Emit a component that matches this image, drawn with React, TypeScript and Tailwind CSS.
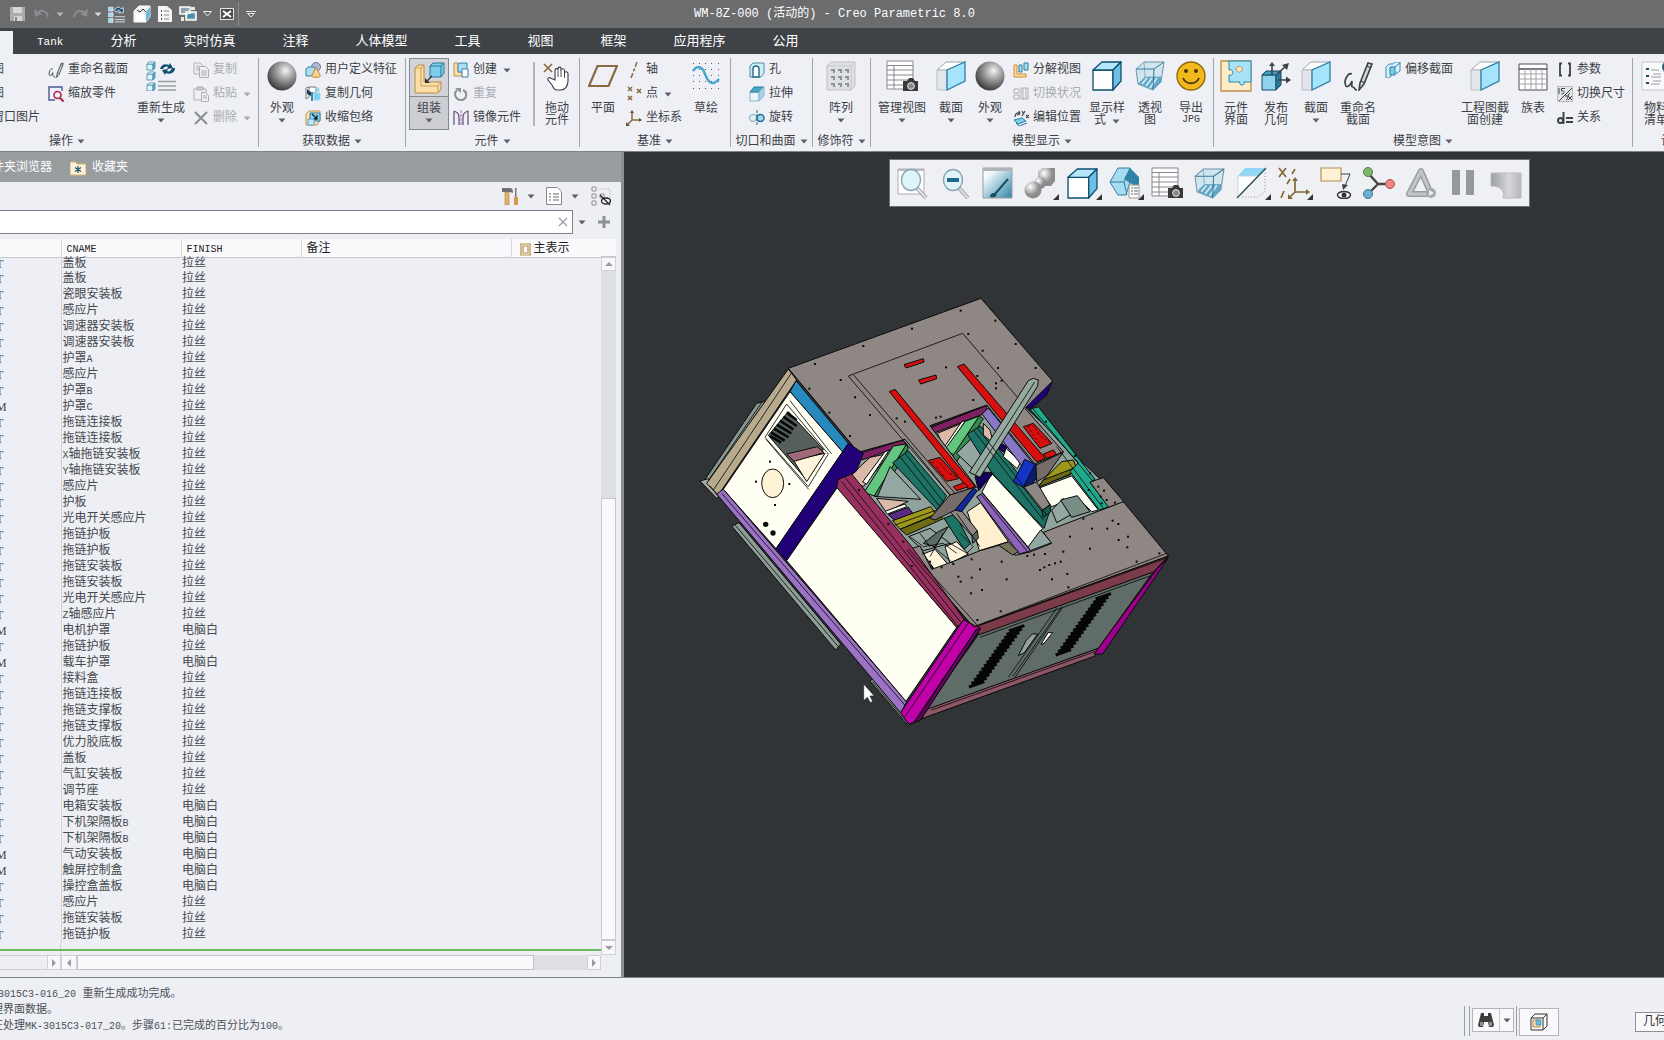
import type { ReactNode } from "react";

const INK = "#3c4248";
const NAVY = "#0d4f70";

/* ---------- Text helpers ---------- */

// Latin runs are set in a smaller mono face beside the Chinese glyphs
function Txt({ children }: { children: string }) {
  return (
    <>
      {children.split(/([\x21-\x7e]+)/).map((part, i) =>
        i % 2 ? (
          <span key={i} className="text-[10px] leading-none">{part}</span>
        ) : (
          part
        )
      )}
    </>
  );
}

function Caret({ className = "text-[#5d6166]" }: { className?: string }) {
  return (
    <svg width="8" height="5" viewBox="0 0 8 5" className={`shrink-0 ${className}`}>
      <path d="M0.5 0.5h7L4 4.5z" fill="currentColor" />
    </svg>
  );
}

/* ---------- Icons ---------- */

function Icon({ size = 16, box = 16, children }: { size?: number; box?: number; children: ReactNode }) {
  return (
    <svg width={size} height={size} viewBox={`0 0 ${box} ${box}`} fill="none" className="shrink-0">
      {children}
    </svg>
  );
}

function Sphere({ size = 30 }: { size?: number }) {
  return (
    <Icon size={size} box={30}>
      <defs>
        <radialGradient id="sphere" cx="0.62" cy="0.32" r="0.75">
          <stop offset="0" stopColor="#f4f4f4" />
          <stop offset="0.35" stopColor="#a9a9a9" />
          <stop offset="1" stopColor="#2e2e2e" />
        </radialGradient>
      </defs>
      <circle cx="15" cy="15" r="14.5" fill="url(#sphere)" />
    </Icon>
  );
}

function Cube({ size = 30 }: { size?: number }) {
  return (
    <Icon size={size} box={30}>
      <g stroke={NAVY} strokeWidth="1.3" strokeLinejoin="round">
        <path d="M1 9h20v20H1z" fill="#fff" />
        <path d="M1 9l9-8h19l-8 8z" fill="#b5e6fa" />
        <path d="M21 9l8-8v19l-8 9z" fill="#6dc0e4" />
      </g>
    </Icon>
  );
}

function SectionCube({ size = 30 }: { size?: number }) {
  return (
    <Icon size={size} box={30}>
      <path d="M1 9L10 1h19l-18 8z" fill="#fff" stroke="#9aa5ad" />
      <path d="M1 9h10v20H1z" fill="#e3e5ea" stroke="#b9bec5" />
      <path d="M11 9L29 1v19l-18 9z" fill="#a6e4fb" stroke="#2a7fa3" strokeWidth="1.3" />
    </Icon>
  );
}

function GlassBox({ size = 30 }: { size?: number }) {
  return (
    <Icon size={size} box={30}>
      <path d="M1 8l8-7h20l-3 20-8 8L3 23z" fill="#cfe6f1" stroke="#6d93a8" />
      <path d="M9 1l1 15h17M10 16L3 23" stroke="#8fb2c2" />
      <path d="M10 16h17l-1 5-8 8L3 23z" fill="#62a9c9" />
      <path d="M12 17l-5 6M17 17l-6 8M22 17l-7 10" stroke="#d7ecf5" strokeWidth="1.6" />
      <path d="M1 8h18l10-7M19 8l-1 21" stroke="#3c7a98" />
    </Icon>
  );
}

function SheetCamera({ size = 32 }: { size?: number }) {
  return (
    <Icon size={size} box={32}>
      <path d="M1 1h26v28H1z" fill="#fff" stroke="#85898e" />
      <path d="M1 5.5h26M1 10h26M1 15h26M1 20h26M1 25h26M8 5v24" stroke="#85898e" />
      <path d="M17 21h4l2-3h4l2 3h3v10H17z" fill="#3a3a3a" />
      <circle cx="25" cy="26" r="3.4" fill="#888" stroke="#e8e8e8" />
    </Icon>
  );
}

function Regenerate({ size = 30 }: { size?: number }) {
  return (
    <Icon size={size} box={30}>
      {[1, 11, 22].map((y) => (
        <g key={y} stroke="#3e8ba8" strokeWidth="0.8">
          <path d={`M1 ${y + 2}h6v6H1z`} fill="#e4f6fd" />
          <path d={`M1 ${y + 2}l2-2h6l-2 2z`} fill="#fff" />
          <path d={`M7 ${y + 2}l2-2v6l-2 2z`} fill="#5bb5d6" />
        </g>
      ))}
      <path d="M14 8c1-4 5-6 9-4l1-2 3 5-6 1 1-2c-2-1-4 0-5 2zM29 7c0 4-4 7-9 5l-1 2-3-5 6-1-1 2c2 1 4 0 5-3z" fill={NAVY} />
      <path d="M12 20.500h18M12 25h18M12 29h18" stroke="#9a9da2" strokeWidth="1.6" />
    </Icon>
  );
}

function Assemble() {
  return (
    <Icon size={32} box={32}>
      <path d="M2 6l3-3h6v17h17v7l-3 4H2z" fill="#fbdfa6" stroke="#b88a45" />
      <path d="M8 6v18h17M8 6l3-3M25 24l3-4M8 6H2M25 24v7" stroke="#c79b56" />
      <path d="M17 4l3-3h11v10l-3 4H17z" fill="#7fcdee" stroke="#2d7694" />
      <path d="M17 4h11v11M28 4l3-3" stroke="#2d7694" />
      <path d="M19 14l-6 6" stroke="#333" strokeWidth="1.3" />
      <path d="M12 16v5h5z" fill="#333" />
    </Icon>
  );
}

function DragHand() {
  return (
    <Icon size={30} box={30}>
      <path d="M2 3l8 8M10 3l-8 8" stroke="#8a6a3a" strokeWidth="1.6" />
      <path d="M13 19V9.500c0-2.500 3-2.500 3 0V8c0-2.500 3-2.500 3 0v1.500c0-2.500 3.500-2 3.500 0v3c0-2.500 3.500-2 3.500 0V20c0 5-3 9-7 9h-4c-3 0-4-3-5-5l-4-5c-1-2 1-3 2.500-2z" fill="#fff" stroke="#3a3a3a" strokeWidth="1.1" />
      <path d="M16 10v6M19 9v7M22.500 12v5" stroke="#3a3a3a" strokeWidth="0.9" />
    </Icon>
  );
}

const PlaneIcon = () => (
  <Icon size={30} box={30}>
    <path d="M9.500 5H29L20.500 25H1z" stroke="#8b6a42" strokeWidth="2.2" />
  </Icon>
);

const SketchIcon = () => (
  <Icon size={30} box={30}>
    {[2, 8, 14, 20, 27].map((y) =>
      [2, 8, 14, 20, 27].map((x) => <path key={`${x}-${y}`} d={`M${x} ${y}h1v1h-1z`} fill="#555" />)
    )}
    <path d="M2 10c4-6 9-5 12 3s7 13 14 5" stroke="#45a5cf" strokeWidth="2.4" />
  </Icon>
);

const PatternIcon = () => (
  <Icon size={30} box={30}>
    <path d="M1 5l4-4h24v24l-4 4H1z" fill="#dfe0e4" stroke="#bfc1c6" />
    <path d="M25 5h-24M25 5v24M25 5l4-4" stroke="#c6c8cc" />
    {[8, 15, 22].map((y) =>
      [5, 12, 19].map((x) => <path key={`${x}-${y}`} d={`M${x} ${y}h4v4h-2v-2h-2z`} fill="#8f9297" />)
    )}
  </Icon>
);

const Smiley = () => (
  <Icon size={30} box={30}>
    <circle cx="15" cy="15" r="14" fill="#f2b91c" stroke="#8c6a10" strokeWidth="1.4" />
    <circle cx="10" cy="10" r="2" fill="#4a3508" />
    <circle cx="20" cy="10" r="2" fill="#4a3508" />
    <path d="M7 17c3 7 13 7 16 0" stroke="#4a3508" strokeWidth="1.8" />
  </Icon>
);

const Puzzle = () => (
  <Icon size={32} box={32}>
    <path d="M1 1h30v30H1z" fill="#fdecc9" stroke="#c08d4a" strokeWidth="1.3" />
    <path d="M9 1h22v21h-7c2 4-6 4-4 0H9v-7c5 2 5-7 0-5z" fill="#a6e2f8" stroke="#2f86a8" />
    <path d="M16 9c1-4 8-3 6 1-1 3-5 3-6-1z" fill="#fdecc9" stroke="#c08d4a" />
  </Icon>
);

const PublishIcon = () => (
  <Icon size={30} box={30}>
    <path d="M1 14h14v15H1z" fill="#8ed4ef" stroke="#1c4a60" />
    <path d="M1 14l4-4h15l-5 4z" fill="#3f9dc0" stroke="#1c4a60" />
    <path d="M15 14l5-4v14l-5 5z" fill="#2b7a99" stroke="#1c4a60" />
    <path d="M11 14V3M16 13L25 5M17 19h10" stroke={INK} strokeWidth="1.6" />
    <path d="M8 5l3-4 3 4zM21 4l7-2-2 7zM25 15.500l5 3.500-5 3.500z" fill={INK} />
  </Icon>
);

function PenScribble({ size = 30 }: { size?: number }) {
  return (
    <Icon size={size} box={30}>
      <path d="M9 13C5 11 0 20 3 25c2 2 5-2 6-5 0 4-1 6 1 6s1 3 4 3" stroke={INK} strokeWidth="1.7" />
      <path d="M17 22L25 2l4 1-8 20-5 6z" fill="#d4d6da" stroke={INK} strokeWidth="1.6" />
      <path d="M24 5l4 2M18 20l4 2" stroke={INK} strokeWidth="1.2" />
    </Icon>
  );
}

const FamilyTable = () => (
  <Icon size={30} box={30}>
    <path d="M1 3h28v26H1z" fill="#fff" stroke="#4b4f54" />
    <path d="M1 8h28" stroke="#4b4f54" strokeWidth="1.5" />
    <path d="M1 13h28M1 18h28M1 23h28M7 8v21M13 8v21M18 8v21M24 8v21" stroke="#a0a3a8" />
  </Icon>
);

const BomIcon = () => (
  <Icon size={30} box={30}>
    <path d="M1 1h28v28H1z" fill="#f9f9fb" stroke="#c3c5c9" />
    <path d="M5 7h3v2H5zM5 14h3v2H5zM5 21h3v2H5z" fill={NAVY} />
    <path d="M10 9h8M12 13h8M10 16h10M12 20h8M10 23h9" stroke="#999ca1" />
    <circle cx="27" cy="6" r="6" fill="#1f5f73" />
  </Icon>
);

// 16px icons
const ZoomPart = () => (
  <Icon>
    <path d="M14 5V1H1v13h6" stroke="#4a5a92" strokeWidth="1.4" />
    <circle cx="9.500" cy="9" r="3.500" stroke="#b02050" strokeWidth="1.6" />
    <path d="M12 12l3.500 3.500" stroke="#b02050" strokeWidth="2" />
  </Icon>
);
const CopyIcon = () => (
  <Icon>
    <g fill="#f0f0f3" stroke="#aeb0b4">
      <path d="M1 1h6l3 3v8H1z" />
      <path d="M6.500 4.500h6l3 3v8h-9z" />
      <path d="M8 9h6M8 11h6M8 13h6M3 4h3M3 6h3M3 8h3" />
    </g>
  </Icon>
);
const PasteIcon = () => (
  <Icon>
    <g fill="#f0f0f3" stroke="#aeb0b4">
      <path d="M1 3h12v11H1z" />
      <path d="M4 1h6v3H4z" fill="#c9cbce" />
      <path d="M8.500 6.500h4l3 3v6h-7z" />
      <path d="M10 10h4M10 12h4" />
    </g>
  </Icon>
);
const DeleteIcon = () => (
  <Icon>
    <path d="M2 2l12 12M14 2L2 14" stroke="#8d9095" strokeWidth="2.2" />
  </Icon>
);
const UserFeature = () => (
  <Icon>
    <circle cx="11" cy="5" r="4.500" fill="#b5b8d6" stroke="#71759c" />
    <path d="M1 7l2-2h7v7l-2 2H1z" fill="#a8ddf3" stroke="#3784a5" />
    <path d="M11 5l4.500 9c-1 2-8 2-9 0z" fill="#f6cf8d" stroke="#bb8a45" />
  </Icon>
);
const CopyGeom = () => (
  <Icon>
    <path d="M1 2v11l3-2V1zM4 1h7v6H4" fill="#fff" stroke="#777" />
    <path d="M2 3l5 4-1 3-4-2z" fill="#1d3f57" />
    <path d="M10 3l4-1v4M9 7h6v7H9z" fill="#7bd0ef" stroke="#9fdcf2" />
    <path d="M7 6v9" stroke="#3e8cab" strokeWidth="2" />
  </Icon>
);
const Shrink = () => (
  <Icon>
    <path d="M1 4l3-3h11v9l-3 5H1z" fill="#fbe3b4" stroke="#bd935a" />
    <path d="M5 3h10v8H5z" fill="#93d6f0" stroke="#2f7d9d" />
    <path d="M7 4l5 5M12 5v4H8" stroke="#123" strokeWidth="1.4" />
    <path d="M3 9h6v6H3z" fill="#c3e9f8" stroke="#5aa3c0" />
  </Icon>
);
const CreateIcon = () => (
  <Icon>
    <path d="M1 1h4v9h8v4H1z" fill="#fbe0ab" stroke="#bb8f50" />
    <path d="M5 2l2-1h7v7l-2 2H5z" fill="#a9dff5" stroke="#3784a5" />
    <path d="M9 7h6v8H9z" fill="#fff" stroke="#3784a5" />
  </Icon>
);
const RepeatIcon = () => (
  <Icon>
    <path d="M4 4c-4 4-1 10 4 10 6 0 7-8 2-10" stroke="#8d9095" strokeWidth="2" />
    <path d="M2 2h6v5z" fill="#8d9095" />
  </Icon>
);
const MirrorIcon = () => (
  <Icon>
    <path d="M1 1c5 2 5 4 5 7v7M1 1v14M15 1c-5 2-5 4-5 7v7M15 1v14" stroke="#6a5880" strokeWidth="1.3" />
    <path d="M8 0v16" stroke="#9a6ab0" strokeDasharray="3 1" />
  </Icon>
);
const AxisIcon = () => (
  <Icon>
    <path d="M11 0L5 16" stroke="#8a6a42" strokeWidth="1.6" strokeDasharray="5 2 3 2" />
  </Icon>
);
const PointIcon = () => (
  <Icon>
    <path d="M2 1l4 4M6 1L2 5M11 3l4 4M15 3l-4 4M2 10l4 4M6 10l-4 4" stroke="#8a6a42" strokeWidth="1.6" />
  </Icon>
);
const CsysIcon = () => (
  <Icon>
    <path d="M6 1v9h9M6 10l-5 5" stroke="#8a6a42" strokeWidth="1.5" />
    <path d="M4 3l2-3 2 3M13 8l3 2-3 2M0 12v4h4" fill="#6b5235" />
  </Icon>
);
const HoleIcon = () => (
  <Icon>
    <path d="M1 4l3-3h11v10l-3 4H1z" fill="#d4eef8" stroke="#4a8ca7" />
    <path d="M4 15V7c0-4 6-4 6 0v8z" fill="#fff" stroke="#1b6d8e" strokeWidth="1.4" />
  </Icon>
);
const ExtrudeIcon = () => (
  <Icon>
    <path d="M1 6h9v9H1z" fill="#e7f5fb" stroke="#8fb5c6" />
    <path d="M1 6l4-5h10l-5 5z" fill="#4aa5c4" stroke="#2d7f9e" />
    <path d="M10 6l5-5v9l-5 5z" fill="#a5d4e5" stroke="#8fb5c6" />
  </Icon>
);
const RevolveIcon = () => (
  <Icon>
    <circle cx="4" cy="8" r="3.500" fill="#dff1f8" stroke="#7aa6ba" />
    <circle cx="11.500" cy="8" r="3.500" fill="#a6dcf2" stroke="#1f6f92" strokeWidth="1.5" />
    <path d="M8 0v16" stroke="#3a5f75" strokeDasharray="3 1" />
  </Icon>
);
const ExplodeIcon = () => (
  <Icon>
    <path d="M1 3h3v9h9v3H1z" fill="#fbdca0" stroke="#d08b30" />
    <path d="M6 3h3v7H6zM11 1h4v7h-4z" fill="#a9dff5" stroke="#2c7da0" />
  </Icon>
);
const SwitchState = () => (
  <Icon>
    <path d="M1 3h5v4H1zM1 9h5v4H1zM8 2h7v11H8zM10 2v11M13 2v11" stroke="#aeb0b4" />
  </Icon>
);
const EditPos = () => (
  <Icon>
    <path d="M2 7c0-4 3-5 5-3l-1-3M7 4l-3 1M9 1l2 3M12 1l-3 5M13 5l3 3M16 5l-3 3" stroke={INK} strokeWidth="1.2" />
    <path d="M1 10l8-2 4 3-8 3z" fill="#83cdea" stroke="#2c7da0" />
    <path d="M3 13l3 3 8-3" stroke="#2c7da0" />
  </Icon>
);
const OffsetSection = () => (
  <Icon>
    <path d="M1 5l3-3h4l2-2h5v9l-3 2-4 1-4 4H1z" fill="#d9f1fa" stroke="#3d8cab" />
    <path d="M5 5h5v8H5zM10 5l5-4" fill="#7ccbe9" stroke="#2c7da0" />
  </Icon>
);
const ParamsIcon = () => (
  <Icon>
    <path d="M5 1.500H3v12h2M11 1.500h2v12h-2" stroke={INK} strokeWidth="1.800" />
  </Icon>
);
const SwitchDim = () => (
  <Icon>
    <path d="M0.500 0.500h15v15H0.500z" fill="#e4e5e8" stroke="#bbb" />
    <path d="M2 2v6M4.500 2.500H8M4.500 2.500v2.500c3-1 4 3 0 3M15 2L2 15M9 14c2 0 2-7 4-7M8 10h4M11 10l4 4M15 10l-4 4" stroke={INK} />
  </Icon>
);
const RelationIcon = () => (
  <Icon>
    <circle cx="3.500" cy="10.500" r="2.500" stroke={INK} strokeWidth="2" />
    <path d="M6.500 2v12" stroke={INK} strokeWidth="2" />
    <path d="M9 8h7M9 12h7" stroke={INK} strokeWidth="1.8" />
  </Icon>
);

/* ---------- Ribbon ---------- */

function Small({ icon, label, muted, caret }: { icon: ReactNode; label: string; muted?: boolean; caret?: boolean }) {
  return (
    <button className={`flex h-6 items-center gap-1 whitespace-nowrap ${muted ? "text-[#a9abb0]" : ""}`}>
      {icon}
      <Txt>{label}</Txt>
      {caret && <Caret className={muted ? "ml-0.5 text-[#a9abb0]" : "ml-0.5 text-[#5d6166]"} />}
    </button>
  );
}

function Big({ icon, lines, caret, w }: { icon: ReactNode; lines: string[]; caret?: "below" | "inline"; w: string }) {
  return (
    <button className={`flex shrink-0 flex-col items-center pt-[3px] leading-3 whitespace-nowrap ${w}`}>
      <span className="mb-3 flex h-[30px] items-center">{icon}</span>
      {lines.map((line, i) => (
        <span key={line} className="flex items-center gap-1.5">
          <Txt>{line}</Txt>
          {caret === "inline" && i === lines.length - 1 && <Caret />}
        </span>
      ))}
      {caret === "below" && <Caret className="mt-[3px] text-[#5d6166]" />}
    </button>
  );
}

function Group({ w, label, labelClass = "justify-center", caret = true, children }: { w: string; label: string; labelClass?: string; caret?: boolean; children: ReactNode }) {
  return (
    <div className={`flex shrink-0 flex-col ${w}`}>
      <div className="flex grow">
        <div className="flex min-w-0 grow flex-col">
          <div className="flex h-[74px] pb-0.5">{children}</div>
          <button className={`flex h-[19px] items-center gap-1 whitespace-nowrap ${labelClass}`}>
            {label}
            {caret && <Caret />}
          </button>
        </div>
        <div className="mb-1 w-px bg-[#a3a6ab]" />
      </div>
    </div>
  );
}

function Ribbon() {
  return (
    <div className="flex h-[98px] overflow-hidden border-b border-[#7f8387] bg-[#eff0f5] pt-1">
      <Group w="w-[259px]" label="操作" labelClass="pl-[49px]">
        <div className="flex w-10 flex-col items-end overflow-hidden whitespace-nowrap leading-6">
          <button className="mr-9">图</button>
          <button className="mr-9">图</button>
          <button>窗口图片</button>
        </div>
        <div className="ml-2 flex w-[82px] flex-col">
          <Small icon={<PenScribble size={16} />} label="重命名截面" />
          <Small icon={<ZoomPart />} label="缩放零件" />
        </div>
        <Big w="w-[62px]" icon={<Regenerate />} lines={["重新生成"]} caret="below" />
        <div className="ml-px flex flex-col">
          <Small icon={<CopyIcon />} label="复制" muted />
          <Small icon={<PasteIcon />} label="粘贴" muted caret />
          <Small icon={<DeleteIcon />} label="删除" muted caret />
        </div>
      </Group>

      <Group w="w-[147px]" label="获取数据">
        <Big w="w-[46px]" icon={<Sphere />} lines={["外观"]} caret="below" />
        <div className="flex flex-col">
          <Small icon={<UserFeature />} label="用户定义特征" />
          <Small icon={<CopyGeom />} label="复制几何" />
          <Small icon={<Shrink />} label="收缩包络" />
        </div>
      </Group>

      <Group w="w-[174px]" label="元件">
        <button className="ml-[3px] flex w-10 flex-col border border-[#85888d] bg-[#cdced3] leading-3">
          <span className="flex h-[38px] w-full shrink-0 items-center justify-center border-b border-[#85888d] bg-[#d3d4d9]">
            <Assemble />
          </span>
          <span className="flex w-full flex-col items-center pt-1.5">
            组装
            <Caret className="mt-[3px] text-[#5d6166]" />
          </span>
        </button>
        <div className="ml-1 flex w-20 flex-col">
          <Small icon={<CreateIcon />} label="创建" caret />
          <Small icon={<RepeatIcon />} label="重复" muted />
          <Small icon={<MirrorIcon />} label="镜像元件" />
        </div>
        <div className="my-1 w-0.5 shrink-0 bg-[#b3b5ba]" />
        <Big w="w-11" icon={<DragHand />} lines={["拖动", "元件"]} />
      </Group>

      <Group w="w-[151px]" label="基准">
        <Big w="w-[46px]" icon={<PlaneIcon />} lines={["平面"]} />
        <div className="flex w-14 flex-col">
          <Small icon={<AxisIcon />} label="轴" />
          <Small icon={<PointIcon />} label="点" caret />
          <Small icon={<CsysIcon />} label="坐标系" />
        </div>
        <Big w="w-12" icon={<SketchIcon />} lines={["草绘"]} />
      </Group>

      <Group w="w-[82px]" label="切口和曲面">
        <div className="ml-[18px] flex flex-col">
          <Small icon={<HoleIcon />} label="孔" />
          <Small icon={<ExtrudeIcon />} label="拉伸" />
          <Small icon={<RevolveIcon />} label="旋转" />
        </div>
      </Group>

      <Group w="w-[58px]" label="修饰符">
        <Big w="w-14" icon={<PatternIcon />} lines={["阵列"]} caret="below" />
      </Group>

      <Group w="w-[343px]" label="模型显示">
        <Big w="w-[62px]" icon={<SheetCamera />} lines={["管理视图"]} caret="below" />
        <Big w="w-9" icon={<SectionCube />} lines={["截面"]} caret="below" />
        <Big w="w-[42px]" icon={<Sphere />} lines={["外观"]} caret="below" />
        <div className="ml-0.5 flex w-[72px] flex-col">
          <Small icon={<ExplodeIcon />} label="分解视图" />
          <Small icon={<SwitchState />} label="切换状况" muted />
          <Small icon={<EditPos />} label="编辑位置" />
        </div>
        <Big w="w-11" icon={<Cube />} lines={["显示样", "式"]} caret="inline" />
        <Big w="w-[42px]" icon={<GlassBox />} lines={["透视", "图"]} />
        <Big w="w-10" icon={<Smiley />} lines={["导出", "JPG"]} />
      </Group>

      <Group w="w-[419px]" label="模型意图">
        <Big w="w-11" icon={<Puzzle />} lines={["元件", "界面"]} />
        <Big w="w-9" icon={<PublishIcon />} lines={["发布", "几何"]} />
        <Big w="w-11" icon={<SectionCube />} lines={["截面"]} caret="below" />
        <Big w="w-10" icon={<PenScribble />} lines={["重命名", "截面"]} />
        <div className="ml-[7px] w-[72px]">
          <Small icon={<OffsetSection />} label="偏移截面" />
        </div>
        <Big w="w-14" icon={<SectionCube />} lines={["工程图截", "面创建"]} />
        <Big w="w-10" icon={<FamilyTable />} lines={["族表"]} />
        <div className="ml-1 flex flex-col">
          <Small icon={<ParamsIcon />} label="参数" />
          <Small icon={<SwitchDim />} label="切换尺寸" />
          <Small icon={<RelationIcon />} label="关系" />
        </div>
      </Group>

      <Group w="w-[80px]" label="设计" labelClass="pl-7" caret={false}>
        <Big w="w-[46px]" icon={<BomIcon />} lines={["物料", "清单"]} />
      </Group>
    </div>
  );
}

/* ---------- Title bar ---------- */

function TitleBar() {
  return (
    <header className="grid h-7 grid-cols-[692px_1fr] items-center bg-[#6a6c6e] text-white">
      <div className="flex items-center pl-2.5">
        <button aria-label="保存">
          <Icon>
            <path d="M0 1h15v14H0z" fill="#a9abad" />
            <path d="M3 1h9v6H3zM4 10h8v5H4z" fill="#d5d6d8" />
            <path d="M5 11h2v4H5z" fill="#888" />
          </Icon>
        </button>
        <button aria-label="撤消" className="ml-2">
          <Icon>
            <path d="M3 8c3-5 10-4 11 3" stroke="#8a8c8e" strokeWidth="2" />
            <path d="M0 3l1 8 7-3z" fill="#8a8c8e" />
          </Icon>
        </button>
        <Caret className="ml-1.5 text-[#b5b7b9]" />
        <button aria-label="重做" className="ml-2">
          <Icon>
            <path d="M13 8C10 3 3 4 2 11" stroke="#8a8c8e" strokeWidth="2" />
            <path d="M16 3l-1 8-7-3z" fill="#8a8c8e" />
          </Icon>
        </button>
        <Caret className="ml-1.5 text-[#d5d6d8]" />
        <button aria-label="重新生成" className="ml-1.5">
          <Icon size={17} box={30}>
            <path d="M1 2h8v7H1zM1 12h8v7H1zM1 22h8v7H1z" fill="#9fd8ee" stroke="#fff" />
            <path d="M12 8c2-8 9-7 11-3l4-2v9h-8l3-3c-3-3-5-2-6 2zM12 19h18M12 24h18M12 28h18" fill={NAVY} stroke="#e8e8e8" strokeWidth="1.6" />
          </Icon>
        </button>
        <button aria-label="外观" className="ml-2">
          <Icon size={18} box={18}>
            <path d="M1 6l5-5h11v11l-4 5H1z" fill="#f2f3f4" stroke="#fff" />
            <path d="M3 8h8v8H3z" fill="#fff" />
            <path d="M13 7l4-5v10l-4 5z" fill="#6db9d6" />
            <path d="M4 5l3 2 3-3 3 3" stroke="#333" />
          </Icon>
        </button>
        <button aria-label="模型信息" className="ml-1.5">
          <Icon>
            <path d="M1 0h9l5 4v12H1z" fill="#f4f4f4" />
            <path d="M4 5h1M4 9h1M4 13h1" stroke="#555" strokeWidth="2" />
            <path d="M7 5h5M7 9h5M7 13h5" stroke="#888" />
          </Icon>
        </button>
        <button aria-label="窗口" className="ml-1.5">
          <Icon size={18} box={18}>
            <path d="M1 2h10v7H1zM7 7h10v8H7z" fill="#8fa4ae" stroke="#fff" strokeWidth="1.5" />
            <path d="M9 9h6v4H9z" fill="#3f8fb3" />
            <path d="M2 12h3v4H2zM12 2h4v3h-4z" fill="#e9e9e9" />
          </Icon>
        </button>
        <svg width="9" height="6" viewBox="0 0 9 6" className="ml-1.5" fill="none">
          <path d="M0.500 0.500h8l-4 4.500z" stroke="#e4e5e6" />
        </svg>
        <button aria-label="关闭窗口" className="ml-2">
          <Icon size={14} box={14}>
            <path d="M0.500 1.500h13v11H0.500z" fill="#4a4c4e" stroke="#e4e5e6" />
            <path d="M3 4l8 6M11 4l-8 6" stroke="#fff" strokeWidth="2" />
          </Icon>
        </button>
        <div className="ml-1 h-6 w-px bg-[#8b8d8f]" />
        <svg width="10" height="7" viewBox="0 0 10 7" className="ml-[7px]" fill="none">
          <path d="M0 0.500h10M1.500 2.500h7L5 6z" stroke="#e4e5e6" />
        </svg>
      </div>
      <h1 className="pl-0.5 text-xs">WM-8Z-000 (活动的) - Creo Parametric 8.0</h1>
    </header>
  );
}

const TABS = ["Tank", "分析", "实时仿真", "注释", "人体模型", "工具", "视图", "框架", "应用程序", "公用"];

function Tabs() {
  return (
    <nav className="flex h-[26px] bg-[#3f4348] text-[13px] text-white">
      <button aria-label="模型" className="mt-[3px] w-[13px] bg-[#eff0f5]" />
      {TABS.map((t) => (
        <button key={t} className="pt-0.5 pr-[23px] pl-6 whitespace-nowrap">
          {t === "Tank" ? <span className="text-[11px]">{t}</span> : t}
        </button>
      ))}
    </nav>
  );
}

/* ---------- Model tree ---------- */

const L = "拉丝";
const W = "电脑白";
const ROWS: [string, string, string][] = [
  ["T", "盖板", L], ["T", "盖板", L], ["T", "瓷眼安装板", L], ["T", "感应片", L],
  ["T", "调速器安装板", L], ["T", "调速器安装板", L], ["T", "护罩A", L], ["T", "感应片", L],
  ["T", "护罩B", L], ["M", "护罩C", L], ["T", "拖链连接板", L], ["T", "拖链连接板", L],
  ["T", "X轴拖链安装板", L], ["T", "Y轴拖链安装板", L], ["T", "感应片", L], ["T", "护板", L],
  ["T", "光电开关感应片", L], ["T", "拖链护板", L], ["T", "拖链护板", L], ["T", "拖链安装板", L],
  ["T", "拖链安装板", L], ["T", "光电开关感应片", L], ["T", "Z轴感应片", L], ["M", "电机护罩", W],
  ["T", "拖链护板", L], ["M", "载车护罩", W], ["T", "接料盒", L], ["T", "拖链连接板", L],
  ["T", "拖链支撑板", L], ["T", "拖链支撑板", L], ["T", "优力胶底板", L], ["T", "盖板", L],
  ["T", "气缸安装板", L], ["T", "调节座", L], ["T", "电箱安装板", W], ["T", "下机架隔板B", W],
  ["T", "下机架隔板B", W], ["M", "气动安装板", W], ["M", "触屏控制盒", W], ["T", "操控盒盖板", W],
  ["T", "感应片", L], ["T", "拖链安装板", L], ["T", "拖链护板", L],
];

function ScrollArrow({ d, className = "" }: { d: string; className?: string }) {
  return (
    <button aria-label="滚动" className={`flex shrink-0 items-center justify-center border border-[#cfd1d5] bg-[#f8f8fa] ${className}`}>
      <svg width="8" height="8" viewBox="0 0 8 8">
        <path d={d} fill="#999ca1" />
      </svg>
    </button>
  );
}

function TreePanel() {
  return (
    <aside className="flex w-[624px] shrink-0 flex-col border-r-[3px] border-[#8d9093] bg-[#eeeff4]">
      <div className="flex h-[30px] items-center bg-[#999da0] pt-0.5 text-white">
        <button className="flex w-[52px] justify-end overflow-hidden whitespace-nowrap">文件夹浏览器</button>
        <button className="ml-[18px] flex items-center gap-1.5">
          <Icon>
            <path d="M0 2h6l1 2h9v11H0z" fill="#fdf3da" stroke="#d3b377" />
            <path d="M8 6v7M5 7.500l6 4M11 7.500l-6 4" stroke="#1f4f66" strokeWidth="1.2" />
          </Icon>
          收藏夹
        </button>
      </div>

      <div className="flex h-7 items-center justify-end pr-2.5">
        <button aria-label="设置">
          <Icon size={18} box={18}>
            <path d="M1 1h8c3 0 3 3 3 5L9 5H1z" fill="#6d7175" />
            <path d="M4 5h4v13H4z" fill="#e1b36a" stroke="#a97c3c" strokeWidth="0.6" />
            <path d="M14 1h1.500v9H14z" fill="#777" />
            <path d="M13 10h4v8h-4z" fill="#d99a50" />
          </Icon>
        </button>
        <Caret className="ml-2 text-[#5d6166]" />
        <button aria-label="显示" className="ml-2.5">
          <Icon size={18} box={18}>
            <path d="M1.500 0.500h11l4 4v13h-15z" fill="#fff" stroke="#85898e" />
            <path d="M4 7h2M4 10h2M4 13h2M8 7h6M8 10h6M8 13h6" stroke="#666" />
          </Icon>
        </button>
        <Caret className="ml-2 text-[#5d6166]" />
        <button aria-label="树过滤器" className="ml-3">
          <Icon size={20} box={20}>
            <path d="M1 1h4v4H1zM1 8h4v4H1zM1 15h4v4H1zM9 8h4v4H9z" stroke="#8d9095" />
            <path d="M5 3h14v14" stroke="#c3c5c9" strokeDasharray="2 1" />
            <ellipse cx="15" cy="15" rx="4.500" ry="3" stroke="#222" strokeWidth="1.3" />
            <path d="M9 9l10 10" stroke="#222" strokeWidth="1.3" />
          </Icon>
        </button>
      </div>

      <div className="flex h-6 items-center">
        <div className="flex h-6 w-[573px] items-center border border-l-0 border-[#7e8186] bg-white pr-1">
          <input aria-label="搜索" className="min-w-0 grow bg-transparent outline-none" />
          <button aria-label="清除">
            <Icon size={10} box={10}>
              <path d="M1 1l8 8M9 1L1 9" stroke="#999ca1" strokeWidth="1.3" />
            </Icon>
          </button>
        </div>
        <Caret className="ml-[5px] text-[#5d6166]" />
        <button aria-label="添加" className="ml-3">
          <Icon size={12} box={12}>
            <path d="M6 0v12M0 6h12" stroke="#8d9095" strokeWidth="3" />
          </Icon>
        </button>
      </div>

      <div className="mt-[5px] flex h-[716px]">
        <div className="flex w-[601px] flex-col">
          <table className="w-full table-fixed border-collapse text-left text-[#45494e]">
            <colgroup>
              <col className="w-[61px]" />
              <col className="w-[120px]" />
              <col className="w-[120px]" />
              <col className="w-[210px]" />
              <col />
            </colgroup>
            <thead>
              <tr className="h-[18px] border-b border-[#c6c8cc] bg-[#fafafc] leading-4 text-[#222]">
                <th className="border-r border-[#d5d7da] p-0" />
                <th className="border-r border-[#d5d7da] p-0 pt-0.5 pl-[5px] font-normal"><Txt>CNAME</Txt></th>
                <th className="border-r border-[#d5d7da] p-0 pt-0.5 pl-[5px] font-normal"><Txt>FINISH</Txt></th>
                <th className="border-r border-[#d5d7da] p-0 pt-0.5 pl-[5px] font-normal">备注</th>
                <th className="p-0 pt-0.5 pl-[7px] font-normal">
                  <span className="flex items-center gap-0.5">
                    <Icon size={13} box={13}>
                      <path d="M1 1h11M1 12h11M2 1v11M11 1v11M4 3h5v7H4z" stroke="#b8924a" strokeWidth="1.2" />
                    </Icon>
                    主表示
                  </span>
                </th>
              </tr>
            </thead>
            <tbody>
              {ROWS.map(([kind, name, finish], i) => (
                <tr key={i} className="leading-4 first:leading-[13px]">
                  <td className="border-r border-[#d0d2d6] p-0">
                    <span className="-ml-1 block font-[family-name:'Liberation_Serif',serif]">{kind}</span>
                  </td>
                  <td className="p-0 pl-px whitespace-nowrap"><Txt>{name}</Txt></td>
                  <td className="p-0 pl-px whitespace-nowrap">{finish}</td>
                  <td className="p-0" />
                  <td className="p-0" />
                </tr>
              ))}
            </tbody>
          </table>
          <div className="h-1.5 w-[61px] shrink-0 border-r border-[#d0d2d6]" />
          <div className="h-0.5 shrink-0 bg-[#6cb95a]" />
          <div className="w-[61px] grow border-r border-[#d0d2d6]" />
        </div>
        <div className="flex w-[15px] flex-col">
          <div className="h-[18px] shrink-0 border-b border-[#c6c8cc] bg-[#fafafc]" />
          <ScrollArrow d="M0 6h8L4 2z" className="h-3.5" />
          <div className="grow-[228] basis-0 bg-[#dddfe2]" />
          <div className="grow-[441] basis-0 border border-[#c6c8cc] bg-[#fafafc]" />
          <ScrollArrow d="M0 2h8L4 6z" className="h-[15px]" />
        </div>
      </div>

      <div className="flex h-[15px] w-[601px]">
        <div className="w-[47px] border-y border-[#cfd1d5]" />
        <ScrollArrow d="M2 0v8l4-4z" className="w-3.5" />
        <ScrollArrow d="M6 0v8L2 4z" className="w-4" />
        <div className="w-[457px] border border-[#c0c2c6] bg-[#f9f9fb]" />
        <div className="grow bg-[#dddfe2]" />
        <ScrollArrow d="M2 0v8l4-4z" className="w-3.5" />
      </div>
    </aside>
  );
}

/* ---------- Graphics area ---------- */

function Magnifier({ children }: { children?: ReactNode }) {
  return (
    <>
      <path d="M20 21l9 10" stroke="#a5a8ac" strokeWidth="4" />
      <path d="M20 21l9 10" stroke="#eee" strokeWidth="1.6" />
      <ellipse cx="14" cy="13" rx="9.500" ry="10.500" fill="#dff3fb" stroke="#8aa5b3" strokeWidth="1.4" />
      {children}
    </>
  );
}

const VIEW_TOOLS: { name: string; more?: boolean; icon: ReactNode }[] = [
  {
    name: "重新调整",
    icon: (
      <Icon size={32} box={32}>
        <path d="M1 2h26v25H1z" fill="#fff" stroke="#aaadb1" />
        <path d="M1 2h26v2H1z" fill="#b9bbbf" />
        <Magnifier />
      </Icon>
    ),
  },
  {
    name: "缩小",
    icon: (
      <Icon size={32} box={32}>
        <Magnifier><path d="M8 11h12v4H8z" fill="#1d6a8c" /></Magnifier>
      </Icon>
    ),
  },
  {
    name: "重画",
    icon: (
      <Icon size={32} box={32}>
        <defs>
          <linearGradient id="repaint" x2="1" y2="1">
            <stop offset="0.2" stopColor="#f3fafd" />
            <stop offset="1" stopColor="#2f84a6" />
          </linearGradient>
        </defs>
        <path d="M1 1h29v30H1z" fill="url(#repaint)" stroke="#9a9da2" />
        <path d="M1 1h29v3H1z" fill="#b0b3b7" />
        <path d="M26 12L13 27" stroke="#174d66" strokeWidth="2" />
        <path d="M8 30c0-4 4-5 6-3s-2 4-6 3z" fill="#174d66" />
      </Icon>
    ),
  },
  {
    name: "渲染选项",
    more: true,
    icon: (
      <Icon size={32} box={32}>
        <defs>
          <radialGradient id="matte" cx="0.35" cy="0.3">
            <stop offset="0" stopColor="#fff" />
            <stop offset="1" stopColor="#8c8c8c" />
          </radialGradient>
        </defs>
        <path d="M14 5l4-4h13v13l-4 5H14z" fill="url(#matte)" />
        <circle cx="16" cy="16" r="6" fill="url(#matte)" />
        <circle cx="9" cy="23" r="8.500" fill="url(#matte)" />
      </Icon>
    ),
  },
  { name: "显示样式", more: true, icon: <Cube size={31} /> },
  {
    name: "已保存方向",
    more: true,
    icon: (
      <Icon size={32} box={32}>
        <path d="M1 15L9 1h12v14l-4 13H9z" fill="#a6dcf2" stroke="#2f7fa0" />
        <path d="M1 15h14l6-14M15 15l3 13" stroke="#2f7fa0" />
        <path d="M15 12l6-11 9 9v10l-6-2z" fill="#2f84a6" />
        <path d="M20 18h10v13H20z" fill="#fff" stroke="#999" />
        <path d="M22 21h2M22 24h2M22 27h2M25 21h4M25 24h4M25 27h4" stroke="#666" />
      </Icon>
    ),
  },
  { name: "视图管理器", icon: <SheetCamera /> },
  { name: "透视图", icon: <GlassBox size={31} /> },
  {
    name: "截面",
    more: true,
    icon: (
      <Icon size={32} box={32}>
        <path d="M2 9l7-8h20l-7 8z" fill="#8fd7f2" />
        <path d="M2 9h20L2 30z" fill="#fff" stroke="#c2d4dc" />
        <path d="M29 3v21l-7 6H5" stroke="#8d9095" strokeDasharray="1 2" />
        <path d="M1 31L30 1" stroke="#274a5c" strokeWidth="1.3" />
      </Icon>
    ),
  },
  {
    name: "基准显示过滤器",
    more: true,
    icon: (
      <Icon size={32} box={32}>
        <path d="M1 1l7 9M8 1l-7 9M17 2l-3 5M12 12l-3 5M6 24l-3 7M17 12v13h13M17 25l-5 5" stroke="#85683a" strokeWidth="1.7" />
        <path d="M14 14l3-4 3 4zM28 22l4 3-4 3zM10 27v5h5z" fill="#85683a" />
      </Icon>
    ),
  },
  {
    name: "注释显示",
    icon: (
      <Icon size={32} box={32}>
        <path d="M1 1h20v13H1z" fill="#fff1d3" stroke="#b58e52" strokeWidth="1.2" />
        <path d="M21 7h9l-5 12" stroke={INK} />
        <path d="M22 17l6 1-5 5z" fill={INK} />
        <ellipse cx="24" cy="28" rx="6.500" ry="3.500" stroke="#333" strokeWidth="1.5" fill="#fff" />
        <circle cx="24" cy="28" r="2.500" fill="#333" />
      </Icon>
    ),
  },
  {
    name: "旋转中心",
    icon: (
      <Icon size={32} box={32}>
        <path d="M5 6l10 11h12M15 17L5 27" stroke="#444" strokeWidth="2.4" />
        <circle cx="5" cy="5" r="4.500" fill="#7fb56d" stroke="#4f7e40" />
        <circle cx="27" cy="17" r="4.500" fill="#ee8484" stroke="#b34c4c" />
        <circle cx="5" cy="27" r="4.500" fill="#6cafd3" stroke="#3a7596" />
      </Icon>
    ),
  },
  {
    name: "仿真",
    icon: (
      <Icon size={32} box={32}>
        <path d="M16 4L4 27h22z" stroke="#9a9da1" strokeWidth="6" strokeLinejoin="round" />
        <path d="M16 4L4 27h22z" stroke="#c3c5c8" strokeWidth="3" strokeLinejoin="round" />
        <circle cx="26" cy="26" r="5" fill="#a5a8ac" />
        <path d="M24 23l5 3-5 3z" fill="#eee" />
      </Icon>
    ),
  },
  {
    name: "暂停",
    icon: (
      <Icon size={32} box={32}>
        <path d="M5 3h8v25H5zM19 3h8v25h-8z" fill="#9699a0" />
      </Icon>
    ),
  },
  {
    name: "结果",
    icon: (
      <Icon size={32} box={32}>
        <defs>
          <linearGradient id="bend">
            <stop offset="0" stopColor="#9a9da2" />
            <stop offset="0.6" stopColor="#d6d7d9" />
            <stop offset="1" stopColor="#b5b7ba" />
          </linearGradient>
        </defs>
        <path d="M1 6h30v25H13C15 24 11 19 1 19z" fill="url(#bend)" stroke="#b9bbbe" />
      </Icon>
    ),
  },
];

function ViewToolbar() {
  return (
    <div className="mt-[7px] ml-[265px] flex h-12 w-[641px] border border-[#6f7377] bg-[#eff0f4] px-0.5">
      {VIEW_TOOLS.map((t) => (
        <button key={t.name} aria-label={t.name} className="relative flex flex-1 items-center justify-center">
          {t.icon}
          {t.more && (
            <svg width="6" height="6" viewBox="0 0 6 6" className="absolute right-0.5 bottom-1.5">
              <path d="M6 0v6H0z" fill="#333" />
            </svg>
          )}
        </button>
      ))}
    </div>
  );
}

// [points, fill] in drawing order, three units to one screen pixel
const FACES: [string, string][] = [
  // rails and feet behind the cabinet
  ["200,370 235,362 60,612 45,598", "#87968e"],
  ["30,603 55,596 90,645 80,655", "#a5aaa2"],
  ["125,738 147,728 452,1092 437,1110", "#8d9c95"],
  ["540,1203 548,1197 660,1326 700,1312 655,1337", "#93a099"],
  // interior floor
  ["505,517 645,478 890,373 1005,380 1300,665 1085,800 1000,830 735,870 450,600", "#8fa39c"],
  ["510,520 640,480 650,494 515,540", "#7d2160"],
  ["540,532 598,520 520,620 478,590", "#dab9a8"],
  ["585,515 597,511 530,612 518,606", "#fffff4"],
  ["610,498 650,492 560,650 522,638", "#62c67e"],
  ["650,492 655,505 570,650 552,648", "#348a50"],
  ["608,548 655,512 770,648 742,690", "#1c7264"],
  ["600,560 692,658 562,650", "#94a8a3"],
  ["560,655 655,664 588,696", "#dab9a8"],
  ["585,694 645,672 650,680 592,702", "#fffff4"],
  ["595,704 655,682 668,700 615,722", "#5a2a88"],
  ["608,722 722,680 738,702 630,748", "#9d981c"],
  ["630,748 745,702 760,716 650,765", "#6f6a14"],
  ["655,770 720,745 780,790 700,812", "#8fa39c"],
  ["700,790 745,755 775,740 735,800", "#5f6b66"],
  ["700,822 735,808 778,858 735,870", "#fff5dc"],
  ["765,800 800,785 835,822 780,850", "#fff5dc"],
  ["762,715 795,702 842,790 822,808", "#1c7264"],
  ["832,695 872,668 955,785 868,812", "#fff0cf"],
  ["780,695 808,684 862,752 846,768", "#8f8783"],
  ["846,768 862,752 865,775 848,790", "#5a6661"],
  ["860,650 878,640 1022,812 988,822", "#8d63b8"],
  ["905,580 1058,745 1015,802 876,636", "#fffff4"],
  ["1015,800 1052,750 1085,788 1020,812", "#94a8a3"],
  ["722,442 892,376 885,400 736,458", "#7d2160"],
  ["742,460 815,430 765,506", "#dab9a8"],
  ["815,425 826,422 772,508 764,500", "#fffff4"],
  ["826,424 868,408 795,525 762,512", "#62c67e"],
  ["868,408 880,416 800,545 788,528", "#348a50"],
  ["800,520 850,470 915,578 858,575", "#94a8a3"],
  ["832,462 872,438 980,575 1080,690 1062,745 905,578", "#1c7264"],
  ["880,430 900,450 910,490 880,465", "#dab9a8"],
  ["918,480 950,500 945,520 925,505", "#16005a"],
  ["948,505 992,545 982,566 940,530", "#fffff4"],
  ["876,402 895,384 1030,552 1002,566", "#8877c4"],
  ["970,605 1004,538 1036,553 1000,622", "#1434c8"],
  ["1000,622 1036,553 1060,565 1025,615", "#0c1c70"],
  ["855,590 882,578 910,580 866,632", "#14005a"],
  ["1060,600 1115,545 1150,540 1158,562 1140,585 1045,620", "#9d981c"],
  ["1060,600 1158,562 1158,575 1045,622", "#6f6a14"],
  ["1045,625 1145,588 1225,690 1205,695 1160,650 1085,680", "#fffff4"],
  ["1020,388 1045,380 1215,598 1200,608 1258,680 1228,690 1140,575 1165,548", "#20a98a"],
  ["1000,622 1040,606 1080,675 1055,692", "#8f8783"],
  ["1055,692 1080,675 1082,695 1060,712", "#1a5a50"],
  ["1085,690 1120,655 1150,700 1100,728", "#94a8a3"],
  ["1112,660 1162,647 1200,695 1145,712", "#7b8e86"],
  ["1200,606 1240,593 1302,666 1256,682", "#8f8783"],
  // top plate with its two arms
  ["1088,303 1070,345 1022,386 1003,378 1045,320", "#220078"],
  ["1030,335 1050,320 1045,338 1022,348", "#7d2160"],
  ["295,265 873,55 1088,303 1005,385 1120,515 1035,552 890,375 720,437 860,622 780,645 645,478 505,517", "#8f8783"],
  ["720,715 780,645 852,622 800,688 735,720", "#766d6b"],
  ["795,690 850,625 862,632 815,695", "#10289a"],
  ["1038,555 1120,516 1070,588 1040,605", "#766d6b"],
  // front table
  ["650,810 690,798 725,868 780,848 870,812 955,788 975,826 1020,816 1085,790 1060,757 1300,665 1435,828 850,1042", "#8f8783"],
  ["925,795 955,786 985,815 968,825", "#77745c"],
  // side face
  ["295,267 320,300 85,645 50,610", "#b8ab8d"],
  ["318,302 475,490 458,516 300,335", "#2789bd"],
  ["300,335 458,516 258,806 100,628", "#fffff4"],
  ["475,490 520,520 500,572 440,622 290,842 258,806", "#220078"],
  ["80,642 100,628 650,1266 632,1298", "#9b72c4"],
  ["442,622 800,1042 648,1264 290,842", "#fffff4"],
  ["445,598 485,582 665,800 825,1022 800,1042 440,622", "#98305f"],
  // doors
  ["868,1060 1390,875 1225,1105 700,1295", "#5f6c67"],
  ["850,1042 1435,828 1390,876 868,1064", "#7c3b49"],
  ["705,1290 1225,1105 1215,1128 690,1318", "#8c5865"],
  ["1435,833 1402,866 1212,1122 1238,1122", "#9c008c"],
  ["820,1020 872,1045 690,1322 655,1332 632,1298", "#c000a8"],
  ["858,1050 872,1045 690,1322 672,1326", "#6d0068"],
  // window
  ["295,395 400,508 350,600 235,466", "#55605c"],
  ["310,540 405,520 350,605", "#fff5dc"],
  ["290,522 382,500 402,518 312,544", "#a06a78"],
  // slots
  ["598,335 615,328 856,620 835,627", "#d80f0f"],
  ["802,260 822,252 1066,535 1040,546", "#d80f0f"],
  ["642,254 700,236 702,246 648,264", "#d80f0f"],
  ["686,300 738,285 740,296 692,312", "#d80f0f"],
  ["715,542 750,532 806,596 770,604", "#d80f0f"],
  ["790,620 822,608 835,620 800,632", "#d80f0f"],
  ["1000,440 1030,430 1086,490 1050,505", "#d80f0f"],
  ["1060,522 1090,510 1100,524 1070,535", "#d80f0f"],
  // diagonal column
  ["838,577 1015,302 1030,295 1045,300 1043,318 870,592", "#94a99f"],
  // handles
  ["985,1127 1003,1118 1043,1062 1027,1062 1008,1082", "#8fa39c"],
  ["1053,1093 1062,1090 1088,1058 1074,1058", "#fffff4"],
];

const EDGES = [
  "M475,288L818,160L985,355M475,288L780,645M490,284L795,640",
  "M290,372L415,522L355,620L225,472ZM300,362L425,522M228,478L356,628",
  "M95,640L645,1276M60,618L85,650M305,278L70,630M215,368L55,602",
  "M465,592L815,1030M455,605L805,1040",
  "M835,1028L645,1310M860,1046L680,1322M650,810L852,1042L1435,832",
  "M655,806L862,1036L1430,820",
  "M968,1190L1115,980M955,1192L1100,985M975,1192L1118,982",
  "M725,1290L1222,1112M870,1072L1380,888",
  "M856,584L1034,306",
  "M630,530L750,680M645,520L760,665M850,450L1062,722M862,445L1070,705",
  "M875,645L1010,812M1030,388L1210,605M1100,500L1240,685M615,735L740,690",
  "M780,790L835,822M730,800L790,850M760,760L720,830M800,700L870,800",
  "M660,770L700,800L760,790L800,820M690,760L720,800M810,760L850,800L830,820",
  "M135,735L445,1100M547,1204L658,1334",
];

const HOLES = [
  [375, 252], [520, 198], [666, 146], [812, 92], [916, 122], [977, 192], [1037, 264], [452, 300], [495, 352],
  [540, 405], [418, 398], [480, 468], [358, 326], [620, 415], [645, 425], [738, 413], [752, 410], [768, 262],
  [835, 162], [878, 212], [924, 264], [935, 302], [918, 310], [918, 325], [850, 360], [862, 288],
  [198, 605], [298, 612], [240, 545], [255, 675], [595, 732], [640, 785], [665, 858], [507, 630],
  [805, 890], [845, 893], [812, 905], [843, 940], [876, 930], [950, 898], [1086, 898], [1135, 922], [932, 994],
  [862, 1020], [870, 868], [935, 845], [1012, 828], [1032, 824], [1050, 870], [1063, 862], [1078, 855],
  [1095, 850], [1112, 845], [1132, 882], [1140, 770], [1180, 716], [1206, 746], [1200, 806], [1252, 746],
  [1268, 722], [1285, 732], [1286, 780], [1312, 802], [1314, 770], [1340, 845], [1408, 820], [1225, 620],
  [1242, 632], [1232, 650], [1250, 660], [1275, 668], [1196, 630], [1235, 670], [1065, 822], [1120, 815],
  [1068, 425], [1155, 528], [1200, 580], [790, 852], [755, 862], [845, 838], [700, 820], [720, 845],
];

// louvre slats of a door, climbing from the lower left
function Louvre({ x, y }: { x: number; y: number }) {
  return (
    <path
      d={Array.from({ length: 17 }, (_, i) => `M${x + i * 7.500 - 23},${y - i * 10.500 + 8}l46,-16`).join("")}
      stroke="#060606"
      strokeWidth="9"
    />
  );
}

function MachineModel() {
  return (
    <svg width="500" height="460" viewBox="0 0 1500 1380" className="mt-[73px] ml-[66px]" fill="none" role="img" aria-label="WM-8Z-000">
      {FACES.map(([points, fill], i) => (
        <polygon key={i} points={points} fill={fill} stroke="#0a0a0a" strokeWidth="3" strokeLinejoin="round" />
      ))}
      {EDGES.map((d) => (
        <path key={d} d={d} stroke="#0a0a0a" strokeWidth="2.5" />
      ))}
      <path d="M290,398l30,22M280,410l40,28M270,422l40,26M260,434l44,26M252,446l44,26M244,458l40,24M240,468l34,20" stroke="#060606" strokeWidth="8" />
      <ellipse cx="248" cy="610" rx="33" ry="43" fill="#fff3d6" stroke="#0a0a0a" strokeWidth="3" />
      <circle cx="227" cy="733" r="8" fill="#0a0a0a" />
      <circle cx="249" cy="759" r="8" fill="#0a0a0a" />
      <Louvre x={860} y={1213} />
      <Louvre x={1120} y={1117} />
      {HOLES.map(([x, y]) => (
        <rect key={`${x}-${y}`} x={x - 3} y={y - 3} width="6" height="6" fill="#0a0a0a" />
      ))}
      <path d="M725,548l20,-4l30,34l25,12M1012,442l18,-4l20,30l28,18M740,560l25,34M1020,450l30,42" stroke="#5a0000" strokeWidth="3" strokeDasharray="8 6" />
      {/* mouse pointer */}
      <path d="M521,1212v50l11,-10l9,16l7,-4l-8,-16h13z" fill="#fff" stroke="#222" strokeWidth="2" />
    </svg>
  );
}

/* ---------- Message log and status bar ---------- */

function StatusBar() {
  return (
    <footer className="flex h-[63px] justify-between overflow-hidden border-t border-[#7f8387] bg-[#eeeff4]">
      <div className="-ml-2 pt-2 text-[11px] leading-4 whitespace-nowrap text-[#4b4f54]">
        <p><Txt>-3015C3-016_20 重新生成成功完成。</Txt></p>
        <p><Txt>理界面数据。</Txt></p>
        <p><Txt>正处理MK-3015C3-017_20。步骤61:已完成的百分比为100。</Txt></p>
      </div>
      <div className="flex items-start pt-7">
        <div className="h-[30px] w-[6px] border-x border-[#9a9da2]" />
        <div className="mt-0.5 ml-0.5 flex h-6 border border-[#b3b5ba] bg-[#f9f9fb]">
          <button aria-label="查找" className="flex w-[27px] items-center justify-center border-r border-[#c6c8cc]">
            <Icon>
              <path d="M3 1h3v3h4V1h3l3 12-1 2h-4l-1-5H6l-1 5H1l-1-2z" fill="#3e3e3e" />
              <path d="M2 10h3v4H2zM11 10h3v4h-3z" fill="#8d8d8d" />
            </Icon>
          </button>
          <button aria-label="查找选项" className="flex w-[13px] items-center justify-center"><Caret /></button>
        </div>
        <div className="ml-0.5 h-[30px] w-px bg-[#9a9da2]" />
        <button aria-label="选择框" className="mt-0.5 ml-0.5 flex h-7 w-10 items-center justify-center border border-[#b3b5ba] bg-[#f9f9fb]">
          <Icon size={18} box={18}>
            <path d="M1 5h12v12H1zM1 5l4-4h12v12l-4 4M13 5l4-4" stroke="#333" />
            <path d="M3 7h7v7H3z" fill="#f6e3bd" stroke="#bb8a45" />
            <path d="M6 7h5v5H6z" fill="#6cbbdc" stroke="#2c7da0" strokeWidth="0.6" />
          </Icon>
        </button>
        <div className="mt-1.5 ml-[76px] w-[29px] overflow-hidden">
          <select aria-label="选择过滤器" className="h-5 w-20 appearance-none border border-[#8d9095] bg-[#f9f9fb] pl-[7px] text-xs text-[#333]">
            <option>几何</option>
          </select>
        </div>
      </div>
    </footer>
  );
}

export default function App() {
  return (
    <div className="flex min-h-screen flex-col overflow-hidden bg-[#eeeff4] font-[family-name:'Liberation_Mono','Noto_Sans_CJK_SC',monospace] text-xs text-[#3c4045]">
      <TitleBar />
      <Tabs />
      <Ribbon />
      <main className="flex grow">
        <TreePanel />
        <section className="min-w-0 grow bg-[#303437]">
          <ViewToolbar />
          <MachineModel />
        </section>
      </main>
      <StatusBar />
    </div>
  );
}
